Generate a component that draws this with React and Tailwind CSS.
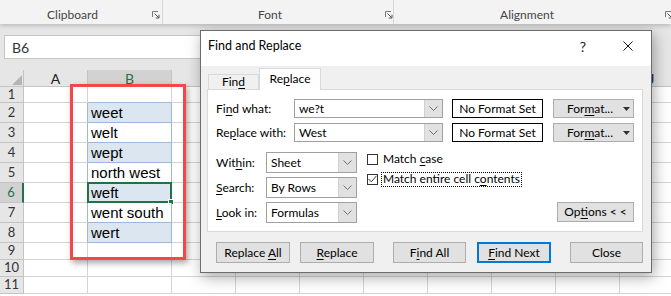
import React from 'react';

const rows = [
  { n: 1, h: 'h-[16px]', v: '' },
  { n: 2, h: 'h-[20px]', v: 'weet', fill: true },
  { n: 3, h: 'h-[20px]', v: 'welt' },
  { n: 4, h: 'h-[20px]', v: 'wept', fill: true },
  { n: 5, h: 'h-[20px]', v: 'north west' },
  { n: 6, h: 'h-[20px]', v: 'weft', fill: true, active: true },
  { n: 7, h: 'h-[20px]', v: 'went south' },
  { n: 8, h: 'h-[20px]', v: 'wert', fill: true },
  { n: 9, h: 'h-[17px]', v: '' },
  { n: 10, h: 'h-[17px]', v: '' },
  { n: 11, h: 'h-[17px]', v: '' },
];

// C..I sit under the dialog, only J peeks out on the right
const rest = ['', '', '', '', '', '', '', 'J'];

const Launcher = ({ className }) => (
  <svg width="8" height="8" viewBox="0 0 8 8" className={className}>
    <path d="M0.5 6V0.5H6" fill="none" stroke="#777" strokeWidth="1" />
    <path d="M2.5 2.5L7 7M7 3.8V7H3.8" fill="none" stroke="#555" strokeWidth="1" />
  </svg>
);

const Chevron = () => (
  <svg width="9" height="5" viewBox="0 0 9 5">
    <path d="M0.5 0.5L4.5 4.5L8.5 0.5" fill="none" stroke="#707070" strokeWidth="1" />
  </svg>
);

// combo box: text field with the grey drop button inside the border
const Combo = ({ value, w }) => (
  <div className={`${w} h-full border border-[#a0a0a0] bg-white flex`}>
    <span className="flex-1 pl-[4px] flex items-center">{value}</span>
    <span className="w-[18px] bg-[#e1e1e1] border-l border-[#d0d0d0] flex items-center justify-center">
      <Chevron />
    </span>
  </div>
);

const Btn = ({ className, children }) => (
  <div className={`h-full bg-[#e1e1e1] border border-[#adadad] flex items-center justify-center ${className}`}>
    <span>{children}</span>
  </div>
);

const FormatBtn = () => (
  <div className="ml-[10px] w-[81px] h-full bg-[#e1e1e1] border border-[#adadad] flex items-center justify-end pr-[3px]">
    <span>
      For<u className="underline-offset-2">m</u>at...
    </span>
    <svg width="7" height="4" viewBox="0 0 7 4" className="ml-[10px]">
      <path d="M0 0H7L3.5 4Z" fill="#333" />
    </svg>
  </div>
);

const Check = ({ checked, children, focus }) => (
  <div className="h-[16px] flex items-center">
    <span className="w-[11px] h-[11px] border border-[#333] bg-white flex items-center justify-center">
      {checked && (
        <svg width="9" height="8" viewBox="0 0 9 8">
          <path d="M0.5 4L3.3 6.8L8.5 0.8" fill="none" stroke="#333" strokeWidth="1" />
        </svg>
      )}
    </span>
    <span
      className={`ml-[3px] px-[1px] h-[15px] flex items-center border border-dotted ${focus ? 'border-black' : 'border-transparent'}`}
    >
      <span>{children}</span>
    </span>
  </div>
);

export default function App() {
  return (
    <div className="relative w-[671px] h-[296px] overflow-hidden bg-white font-['Lato',sans-serif]">
      {/* ribbon group labels */}
      <div className="relative z-10 h-[24px] bg-[#f3f3f3] flex text-[12px] text-[#444] shadow-[0_2px_4px_rgba(0,0,0,0.18)]">
        <div className="w-[163px] shrink-0 flex items-center pt-[6px] border-r border-[#d6d6d6]">
          <span className="w-[145px] text-center">Clipboard</span>
          <Launcher className="ml-[7px]" />
        </div>
        <div className="w-[231px] shrink-0 flex items-center pt-[6px] border-r border-[#d6d6d6]">
          <span className="w-[214px] text-center">Font</span>
          <Launcher className="ml-[8px]" />
        </div>
        <div className="w-[290px] shrink-0 flex items-center pt-[6px]">
          <span className="w-[266px] text-center">Alignment</span>
          <Launcher className="ml-[5px]" />
        </div>
      </div>

      {/* name box */}
      <div className="h-[46px] bg-[#e6e6e6] pt-[11px] pl-[4px]">
        <div className="w-[320px] h-[24px] bg-white border border-[#c6c6c6] flex items-center pl-[7px] text-[14px] text-[#333]">
          B6
        </div>
      </div>

      {/* sheet */}
      <div className="text-[14px]">
        <div className="h-[17px] flex bg-[#e6e6e6] border-b border-[#c4c4c4] text-[#222]">
          <div className="w-[24px] shrink-0 border-r border-[#c4c4c4] flex items-end justify-end pr-[1px] pb-[1px]">
            <svg width="10" height="10" viewBox="0 0 10 10">
              <path d="M0 10H10V0Z" fill="#b5b5b5" />
            </svg>
          </div>
          <div className="w-[64px] shrink-0 border-r border-[#c4c4c4] flex items-center justify-center">A</div>
          <div className="w-[84px] shrink-0 border-r border-[#c4c4c4] bg-[#d2d2d2] text-[#217346] flex items-center justify-center">
            B
          </div>
          {rest.map((c, i) => (
            <div key={i} className="w-[64px] shrink-0 border-r border-[#c4c4c4] flex items-center justify-center">
              {c}
            </div>
          ))}
        </div>

        {rows.map((r) => {
          const inRange = r.n >= 2 && r.n <= 8;
          return (
            <div key={r.n} className={`${r.h} flex`}>
              <div
                className={`w-[24px] shrink-0 border-b border-[#c4c4c4] flex items-center justify-center text-[13px] ${
                  r.active
                    ? 'bg-[#d2d2d2] text-[#217346] border-r-2 border-r-[#217346]'
                    : 'bg-[#e6e6e6] text-[#333] border-r border-r-[#c4c4c4]'
                }`}
              >
                {r.n}
              </div>
              <div
                className={`w-[64px] shrink-0 border-b border-r border-[#d4d4d4] ${inRange ? 'border-r-[#9bb7d9]' : ''}`}
              />
              <div
                className={`relative w-[84px] shrink-0 border-b border-r pl-[3px] flex items-end font-['Liberation_Sans',sans-serif] text-[15px] leading-[18px] text-black ${
                  inRange ? 'border-[#9bb7d9]' : r.n === 1 ? 'border-[#d4d4d4] border-b-[#9bb7d9]' : 'border-[#d4d4d4]'
                } ${r.fill ? 'bg-[#dce6f1]' : 'bg-white'}`}
              >
                {r.v}
                {r.active && (
                  <div className="absolute -left-[1px] -top-[1px] -right-[1px] -bottom-[1px] border-2 border-[#217346]">
                    <div className="absolute -right-[4px] -bottom-[4px] w-[6px] h-[6px] bg-[#217346] border border-white" />
                  </div>
                )}
              </div>
              {rest.map((c, i) => (
                <div key={i} className="w-[64px] shrink-0 border-b border-r border-[#d4d4d4]" />
              ))}
            </div>
          );
        })}
      </div>

      {/* red highlight box */}
      <div className="absolute left-[70px] top-[84px] w-[116px] h-[176px] border-[3px] border-[#f44848] shadow-[2px_3px_6px_rgba(0,0,0,0.35)]" />

      {/* Find and Replace dialog */}
      <div className="absolute left-[200px] top-[30px] w-[452px] h-[243px] border border-[#6d6d6d] bg-[#f0f0f0] flex flex-col text-[12px] text-black shadow-[2px_4px_14px_rgba(0,0,0,0.35)]">
        <div className="h-[35px] shrink-0 bg-white flex items-center pb-[5px]">
          <span className="ml-[7px] text-[12.5px]">Find and Replace</span>
          <span className="ml-auto text-[14px] text-[#222]">?</span>
          <svg width="10" height="10" viewBox="0 0 10 10" className="ml-[37px] mr-[18px]">
            <path d="M0.5 0.5L9.5 9.5M9.5 0.5L0.5 9.5" stroke="#111" strokeWidth="1" />
          </svg>
        </div>

        <div className="flex-1 flex flex-col pt-[2px]">
          <div className="relative z-10 h-[21px] flex items-end pl-[7px]">
            <div className="w-[51px] h-[15px] border border-b-0 border-[#d9d9d9] bg-[#f0f0f0] flex items-center justify-center">
              <span>
                Fin<u className="underline-offset-2">d</u>
              </span>
            </div>
            <div className="w-[62px] h-[22px] -mb-[1px] border border-b-0 border-[#d9d9d9] bg-white flex items-center justify-center pb-[2px]">
              <span>
                Re<u className="underline-offset-2">p</u>lace
              </span>
            </div>
          </div>

          <div className="ml-[6px] w-[436px] h-[143px] border border-[#d9d9d9] bg-white pt-[9px] px-[8px]">
            <div className="h-[19px] flex items-center">
              <span className="w-[78px]">
                Fi<u className="underline-offset-2">n</u>d what:
              </span>
              <Combo value="we?t" w="w-[149px]" />
              <div className="ml-[9px] w-[91px] h-full border border-black flex items-center justify-center">No Format Set</div>
              <FormatBtn />
            </div>
            <div className="mt-[5px] h-[19px] flex items-center">
              <span className="w-[78px]">
                Re<u className="underline-offset-2">p</u>lace with:
              </span>
              <Combo value="West" w="w-[149px]" />
              <div className="ml-[9px] w-[91px] h-full border border-black flex items-center justify-center">No Format Set</div>
              <FormatBtn />
            </div>

            <div className="mt-[10px] flex">
              <div className="flex flex-col gap-[4px]">
                <div className="h-[21px] flex items-center">
                  <span className="w-[50px]">
                    Wit<u className="underline-offset-2">h</u>in:
                  </span>
                  <Combo value="Sheet" w="w-[91px]" />
                </div>
                <div className="h-[21px] flex items-center">
                  <span className="w-[50px]">
                    <u className="underline-offset-2">S</u>earch:
                  </span>
                  <Combo value="By Rows" w="w-[91px]" />
                </div>
                <div className="h-[21px] flex items-center">
                  <span className="w-[50px]">
                    <u className="underline-offset-2">L</u>ook in:
                  </span>
                  <Combo value="Formulas" w="w-[91px]" />
                </div>
              </div>

              <div className="ml-[10px] -mt-[1px] flex flex-col gap-[4px]">
                <Check>
                  Match <u className="underline-offset-2">c</u>ase
                </Check>
                <Check checked focus>
                  Match entire cell c<u className="underline-offset-2">o</u>ntents
                </Check>
              </div>

              <Btn className="ml-auto self-end mb-[1px] w-[77px] !h-[20px]">
                Op<u className="underline-offset-2">t</u>ions &lt; &lt;
              </Btn>
            </div>
          </div>

          <div className="mt-[10px] h-[21px] flex pl-[15px]">
            <Btn className="w-[74px]">
              Replace <u className="underline-offset-2">A</u>ll
            </Btn>
            <Btn className="ml-[10px] w-[74px]">
              <u className="underline-offset-2">R</u>eplace
            </Btn>
            <Btn className="ml-[19px] w-[73px]">
              F<u className="underline-offset-2">i</u>nd All
            </Btn>
            <div className="ml-[11px] w-[74px] h-full bg-[#e1e1e1] border-2 border-[#0078d7] flex items-center justify-center">
              <span>
                <u className="underline-offset-2">F</u>ind Next
              </span>
            </div>
            <Btn className="ml-[19px] w-[73px]">Close</Btn>
          </div>
        </div>
      </div>
    </div>
  );
}
